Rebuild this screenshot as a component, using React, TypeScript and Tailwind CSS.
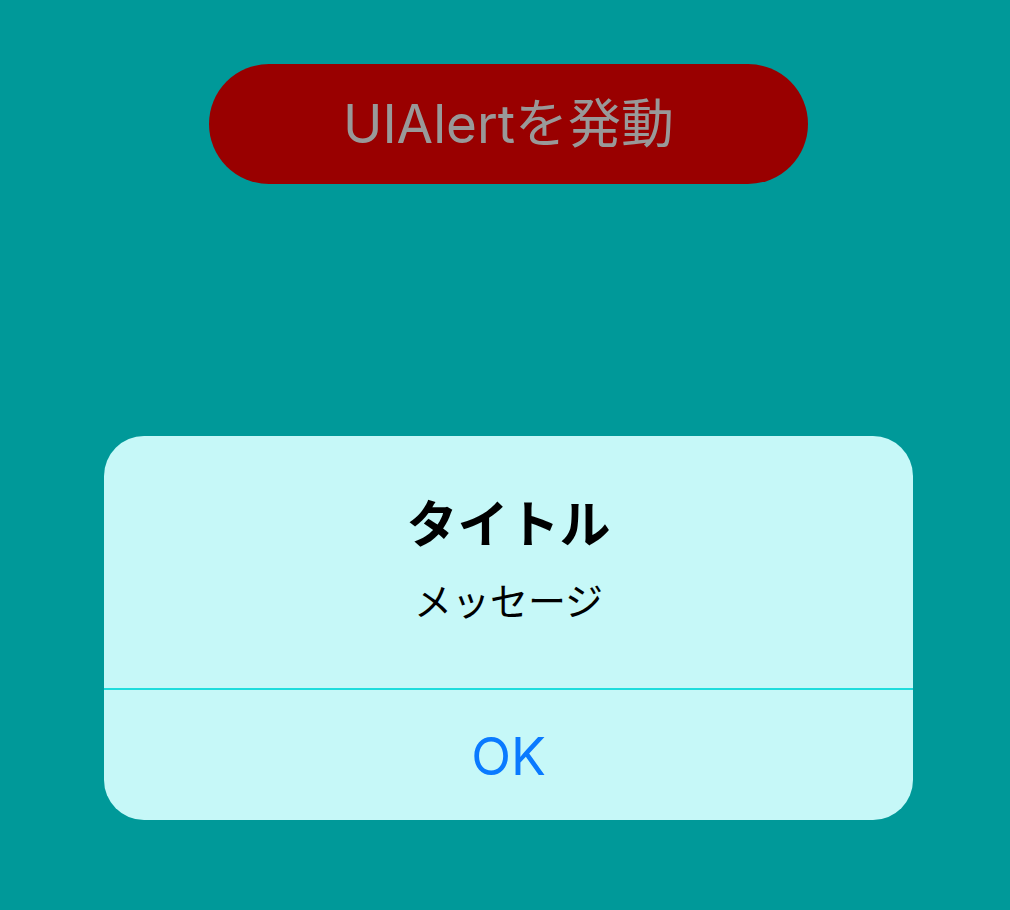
export default function App() {
  return (
    <div
      className="flex min-h-[910px] w-full flex-col items-center bg-[#009999] pl-[7px] pt-[64px]"
      style={{ fontFamily: '"Inter", "Noto Sans CJK JP", sans-serif' }}
    >
      <button
        type="button"
        className="flex h-[120px] w-[599px] items-center justify-center rounded-full bg-[#990000] text-[53px] leading-none text-[#999999]"
      >
        UIAlertを発動
      </button>

      <div className="mt-[252px] flex w-[809px] flex-col overflow-hidden rounded-[40px] bg-[#c6f8f8]">
        <div className="flex h-[252px] flex-col items-center pt-[59px]">
          <h2 className="text-[51px] font-semibold leading-[60px] text-black">タイトル</h2>
          <p className="mt-[21px] text-[38px] leading-[50px] text-black">メッセージ</p>
        </div>
        <div className="h-[2px] bg-[#1edcdc]" />
        <button
          type="button"
          className="flex h-[130px] items-center justify-center pt-[3px] text-[52px] leading-none text-[#0a7aff]"
        >
          OK
        </button>
      </div>
    </div>
  )
}
